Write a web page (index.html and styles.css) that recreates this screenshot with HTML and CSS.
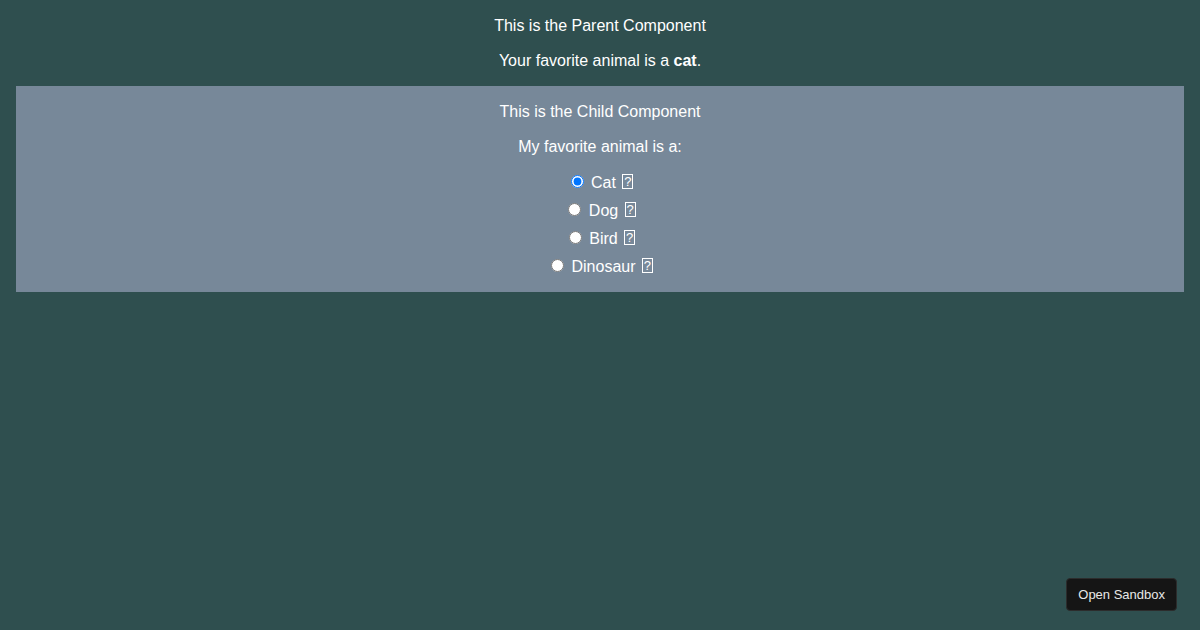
FILE: index.html
```html
<!DOCTYPE html>
<html lang="en">
<head>
  <meta charset="UTF-8">
  <title>Parent and Child</title>
  <link rel="stylesheet" href="styles.css">
</head>
<body>

  <div class="parent">
    <p>This is the Parent Component</p>
    <p>Your favorite animal is a <strong>cat</strong>.</p>

    <div class="child">
      <p>This is the Child Component</p>
      <p>My favorite animal is a:</p>

      <!-- emoji have no glyph in the original font, shown as a missing-glyph box -->
      <div class="option">
        <input type="radio" name="animal" id="cat" checked>
        <label for="cat">Cat <span class="tofu" title="🐱">?</span></label>
      </div>
      <div class="option">
        <input type="radio" name="animal" id="dog">
        <label for="dog">Dog <span class="tofu" title="🐶">?</span></label>
      </div>
      <div class="option">
        <input type="radio" name="animal" id="bird">
        <label for="bird">Bird <span class="tofu" title="🐦">?</span></label>
      </div>
      <div class="option">
        <input type="radio" name="animal" id="dino">
        <label for="dino">Dinosaur <span class="tofu" title="🦖">?</span></label>
      </div>
    </div>
  </div>

  <button class="sandbox-btn">Open Sandbox</button>

</body>
</html>
```

FILE: styles.css
```css
body {
  font-family: "Liberation Sans", Arial, sans-serif;
  font-size: 16px;
  background: darkslategray;
  color: #fff;
  margin: 0;
  padding: 16px;
}

.parent {
  text-align: center;
}

.parent p {
  margin: 0 0 16px;
  line-height: 19px;
}

.child {
  background: lightslategray;
  padding: 16px 0 8px;
}

.child p {
  margin: 0 0 16px;
}

.option {
  height: 28px;
  line-height: normal;
}

.option input {
  margin: 3px 3px 0 5px;
}

.tofu {
  display: inline-block;
  box-sizing: border-box;
  width: 11px;
  height: 15px;
  margin: 0 1px 0 2px;
  border: 1px solid #fff;
  font-size: 13px;
  line-height: 13px;
  text-align: center;
  vertical-align: 2px;
}

.sandbox-btn {
  position: fixed;
  right: 23px;
  bottom: 19px;
  background: #151515;
  color: #e8e8e8;
  border: 1px solid #2c2c2c;
  border-radius: 4px;
  font-family: "Liberation Sans", Arial, sans-serif;
  font-size: 13px;
  padding: 8px 11px;
}
```
